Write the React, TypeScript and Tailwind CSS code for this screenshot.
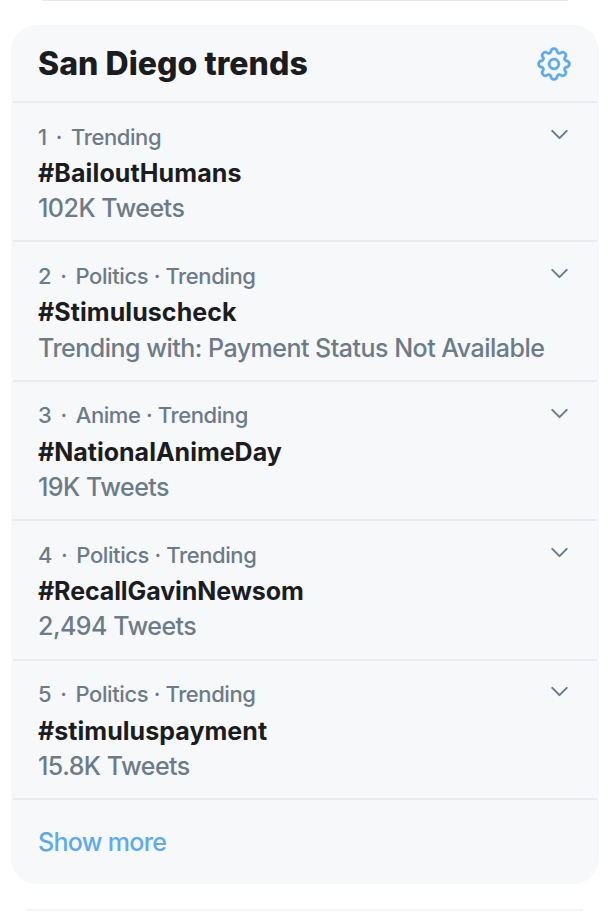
import { ChevronDown } from 'lucide-react';

interface Trend {
  rank: number;
  context: string;
  name: string;
  detail: string;
  nameClass: string;
}

const trends: Trend[] = [
  { rank: 1, context: 'Trending', name: '#BailoutHumans', detail: '102K Tweets', nameClass: 'tracking-[0.11px]' },
  { rank: 2, context: 'Politics · Trending', name: '#Stimuluscheck', detail: 'Trending with: Payment Status Not Available', nameClass: 'tracking-[0.07px]' },
  { rank: 3, context: 'Anime · Trending', name: '#NationalAnimeDay', detail: '19K Tweets', nameClass: 'tracking-[0px]' },
  { rank: 4, context: 'Politics · Trending', name: '#RecallGavinNewsom', detail: '2,494 Tweets', nameClass: 'tracking-[-0.1px]' },
  { rank: 5, context: 'Politics · Trending', name: '#stimuluspayment', detail: '15.8K Tweets', nameClass: 'tracking-[0.04px]' },
];

function GearIcon() {
  return (
    <svg viewBox="0 0 24 24" className="h-[38px] w-[38px] fill-[#5eaaec] stroke-[#5eaaec] stroke-[0.3]">
      <path d="M12 8.21c-2.09 0-3.79 1.7-3.79 3.79s1.7 3.79 3.79 3.79 3.79-1.7 3.79-3.79-1.7-3.79-3.79-3.79zm0 6.08c-1.262 0-2.29-1.026-2.29-2.29S10.74 9.71 12 9.71s2.29 1.026 2.29 2.29-1.028 2.29-2.29 2.29z" />
      <path d="M12.36 22.375h-.722c-1.183 0-2.154-.888-2.262-2.064l-.014-.147c-.025-.287-.207-.533-.472-.644-.286-.12-.582-.065-.798.115l-.116.097c-.868.725-2.253.663-3.06-.14l-.51-.51c-.836-.84-.896-2.154-.14-3.06l.098-.118c.186-.222.23-.523.122-.787-.11-.272-.358-.454-.646-.48l-.15-.014c-1.18-.107-2.067-1.08-2.067-2.262v-.722c0-1.183.888-2.154 2.064-2.262l.156-.014c.285-.025.53-.207.642-.473.11-.27.065-.573-.12-.795l-.094-.116c-.757-.908-.698-2.223.137-3.06l.512-.512c.804-.804 2.188-.865 3.06-.14l.116.098c.218.184.528.23.79.122.27-.112.452-.358.477-.643l.014-.153c.107-1.18 1.08-2.066 2.262-2.066h.722c1.183 0 2.154.888 2.262 2.064l.014.156c.025.285.206.53.472.64.277.117.58.062.794-.117l.12-.102c.867-.723 2.254-.662 3.06.14l.51.512c.836.838.896 2.153.14 3.06l-.1.118c-.188.22-.234.522-.123.788.112.27.36.45.646.478l.152.014c1.18.107 2.067 1.08 2.067 2.262v.723c0 1.183-.888 2.154-2.064 2.262l-.155.014c-.284.024-.53.205-.64.47-.113.272-.067.574.117.795l.1.12c.756.905.696 2.22-.14 3.06l-.51.51c-.807.804-2.19.864-3.06.14l-.115-.096c-.217-.183-.53-.23-.79-.122-.273.114-.455.36-.48.646l-.014.15c-.107 1.173-1.08 2.06-2.262 2.06zm-3.773-4.42c.3 0 .593.06.87.175.79.328 1.324 1.054 1.4 1.896l.014.147c.037.4.367.7.77.7h.722c.4 0 .73-.3.768-.7l.014-.148c.076-.842.61-1.567 1.392-1.892.793-.33 1.696-.182 2.333.35l.113.094c.178.148.366.18.493.18.206 0 .4-.08.546-.227l.51-.51c.284-.284.305-.73.048-1.038l-.1-.12c-.542-.65-.677-1.54-.352-2.323.326-.79 1.052-1.32 1.894-1.397l.155-.014c.397-.037.7-.367.7-.77v-.722c0-.4-.303-.73-.702-.768l-.152-.014c-.846-.078-1.57-.61-1.895-1.393-.326-.788-.19-1.678.353-2.327l.1-.118c.257-.31.236-.756-.048-1.04l-.51-.51c-.146-.147-.34-.227-.546-.227-.127 0-.315.032-.492.18l-.12.1c-.634.528-1.55.67-2.322.354-.788-.327-1.32-1.052-1.397-1.896l-.014-.155c-.035-.397-.365-.7-.767-.7h-.723c-.4 0-.73.303-.768.702l-.014.152c-.076.843-.608 1.568-1.39 1.893-.787.326-1.693.183-2.33-.35l-.118-.096c-.18-.15-.368-.18-.495-.18-.206 0-.4.08-.546.226l-.512.51c-.282.284-.303.73-.046 1.038l.1.118c.54.653.677 1.544.352 2.325-.327.788-1.052 1.32-1.895 1.397l-.156.014c-.397.037-.7.367-.7.77v.722c0 .4.303.73.702.768l.15.014c.848.078 1.573.612 1.897 1.396.325.786.19 1.675-.353 2.325l-.096.115c-.26.31-.238.756.046 1.04l.51.51c.146.147.34.227.546.227.127 0 .315-.03.492-.18l.116-.096c.406-.336.923-.524 1.453-.524z" />
    </svg>
  );
}

export default function App() {
  return (
    <div className="flex h-[911px] w-[610px] flex-col overflow-hidden bg-white font-['Inter','Liberation_Sans',sans-serif]">
      <div className="ml-[42px] h-px w-[526px] shrink-0 bg-[#e6ebf0]" />
      <section className="mt-6 ml-[11px] h-[859px] w-[588px] shrink-0 overflow-hidden rounded-[26px] bg-[#f6f8fa] px-[2px]">
        <header className="flex h-[78px] items-center justify-between border-b-2 border-[#eaecf0] pt-[2px] pr-[24px] pl-[25px]">
          <h1 className="text-[32px] font-[850] tracking-[0.05px] text-[#1a1c1f]">San Diego trends</h1>
          <GearIcon />
        </header>
        {trends.map((t) => (
          <article key={t.rank} className="flex h-[139.4px] justify-between border-b-2 border-[#eaecf0] pt-[16.5px] pr-[23.5px] pl-[25px]">
            <div className="whitespace-nowrap">
              <p className="text-[22px] leading-[34px] font-[450] tracking-[-0.4px] text-[#6d7b88]">
                {t.rank}
                <span className="mr-[9px] ml-[9px]">·</span>
                {t.context}
              </p>
              <h2 className={`mt-[1.5px] text-[25px] leading-[37px] font-bold text-[#1a1c1f] ${t.nameClass}`}>{t.name}</h2>
              <p className="-mt-[0.8px] text-[25px] leading-[35px] font-[450] tracking-[-0.51px] text-[#6d7b88]">{t.detail}</p>
            </div>
            <ChevronDown className="mt-[0.3px] -ml-6 h-[29px] w-[29px] shrink-0 text-[#6d7b88]" strokeWidth={1.7} />
          </article>
        ))}
        <a className="block pt-[25px] pl-[25px] text-[25px] leading-[35px] font-[450] tracking-[-0.7px] text-[#5eaaec]">Show more</a>
      </section>
      <div className="mt-[25px] ml-[27px] h-[2px] w-[556px] shrink-0 bg-[#f4f5f6]" />
    </div>
  );
}
